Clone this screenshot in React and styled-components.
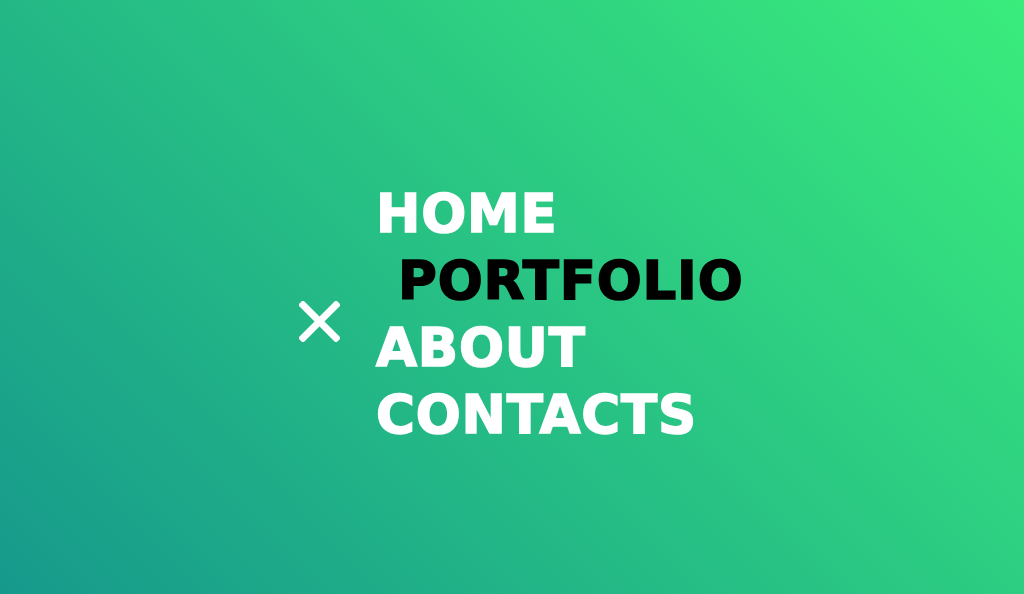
import React from "react"
import styled, { createGlobalStyle } from "styled-components"

const GlobalStyle = createGlobalStyle`
  html, body {
    margin: 0;
    padding: 0;
  }
  body {
    font-family: "DejaVu Sans", "Liberation Sans", sans-serif;
  }
`

const StyledPage = styled.div`
  width: 100vw;
  height: 100vh;
  min-height: 594px;
  background: linear-gradient(45deg, #16998c, #3aec7c);
  display: flex;
  justify-content: center;
  align-items: center;
  box-sizing: border-box;
  padding: 34px 0 0 17px;
  overflow: hidden;
`

const StyledMenu = styled.nav`
  display: flex;
  flex-flow: row;
  align-items: center;
  gap: 36px;
`

const StyledClose = styled.button`
  display: flex;
  justify-content: center;
  align-items: center;
  width: 41px;
  height: 41px;
  padding: 0;
  margin-top: 14px;
  border: none;
  background: transparent;
  color: #fff;

  :hover {
    cursor: pointer;
  }
`

const StyledList = styled.ul`
  list-style: none;
  margin: 0;
  padding: 0;
  width: 366px;
`

const StyledItem = styled.li`
  font-size: 53px;
  font-weight: bold;
  line-height: 67px;
  letter-spacing: 0.8px;
  white-space: nowrap;
  -webkit-text-stroke: 1.6px currentColor;
  color: ${({ active }) => (active ? "#000" : "#fff")};
  padding-left: ${({ active }) => (active ? "22px" : "0")};

  :hover {
    cursor: pointer;
  }
`

const links = ["HOME", "PORTFOLIO", "ABOUT", "CONTACTS"]

const App = () => {
  return (
    <>
      <GlobalStyle />
      <StyledPage>
        <StyledMenu>
          <StyledClose aria-label="close menu">
            <svg width="41" height="41" viewBox="0 0 41 41">
              <path
                d="M4 4 L37 37 M37 4 L4 37"
                stroke="currentColor"
                strokeWidth="7"
                strokeLinecap="square"
              />
            </svg>
          </StyledClose>
          <StyledList>
            {links.map(link => (
              <StyledItem key={link} active={link === "PORTFOLIO"}>
                {link}
              </StyledItem>
            ))}
          </StyledList>
        </StyledMenu>
      </StyledPage>
    </>
  )
}

export default App
